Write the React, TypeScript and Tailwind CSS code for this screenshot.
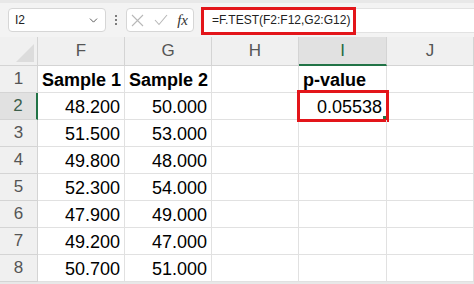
import { ChevronDown } from "lucide-react";

const cols = ["F", "G", "H", "I", "J"];

const rows = [
  { n: 1, f: "Sample 1", g: "Sample 2", i: "p-value", head: true },
  { n: 2, f: "48.200", g: "50.000", i: "0.05538" },
  { n: 3, f: "51.500", g: "53.000" },
  { n: 4, f: "49.800", g: "48.000" },
  { n: 5, f: "52.300", g: "54.000" },
  { n: 6, f: "47.900", g: "49.000" },
  { n: 7, f: "49.200", g: "47.000" },
  { n: 8, f: "50.700", g: "51.000" },
];

function Toolbar() {
  return (
    <div className="h-[37px] bg-[#f3f3f3] border-t-[3px] border-[#e8e8e8] flex items-center pl-[8px] gap-[6px]">
      {/* name box */}
      <div className="w-[98px] h-[24px] bg-white border border-[#d6d6d6] rounded-[4px] flex items-center justify-between pl-[6px] pr-[5px]">
        <span className="text-[12px] text-[#222]">I2</span>
        <ChevronDown size={13} strokeWidth={1.6} className="text-[#444]" />
      </div>
      {/* dots */}
      <div className="flex flex-col gap-[2px] px-[3px]">
        <span className="w-[2px] h-[2px] bg-[#555] rounded-full" />
        <span className="w-[2px] h-[2px] bg-[#555] rounded-full" />
        <span className="w-[2px] h-[2px] bg-[#555] rounded-full" />
      </div>
      {/* cancel / enter / fx */}
      <div className="w-[68px] h-[24px] bg-white border border-[#d6d6d6] rounded-[4px] flex items-center justify-between px-[4px]">
        <svg width="13" height="13" viewBox="0 0 13 13" fill="none" stroke="#b8b8b8" strokeWidth="1.1">
          <path d="M1 1 L12 12 M12 1 L1 12" />
        </svg>
        <svg width="14" height="12" viewBox="0 0 14 12" fill="none" stroke="#b8b8b8" strokeWidth="1.1">
          <path d="M1 6 L5 10.5 L13 1" />
        </svg>
        <span className="text-[15px] italic text-[#333] leading-none pr-[1px]" style={{ fontFamily: '"Liberation Serif", serif' }}>
          fx
        </span>
      </div>
      {/* formula bar */}
      <div className="flex-1 h-[25px] bg-white border-y border-[#e2e2e2] flex items-center relative ml-[1px]">
        <div className="absolute left-0 top-[-2px] w-[155px] h-[28px] border-[3px] border-[#e3151a]" />
        <span className="text-[12px] text-[#222] pl-[11px]">=F.TEST(F2:F12,G2:G12)</span>
      </div>
    </div>
  );
}

function Grid() {
  return (
    <div className="grid grid-cols-[38px_87px_87px_87px_88px_1fr] grid-rows-[29px_repeat(8,27px)] bg-white">
      {/* corner */}
      <div className="bg-[#f0f0f0] border-r border-b border-[#d4d4d4] flex items-end justify-end pr-[3px] pb-[3px]">
        <div className="w-0 h-0 border-l-[18px] border-l-transparent border-b-[18px] border-b-[#dcdcdc]" />
      </div>
      {cols.map((c) => (
        <div
          key={c}
          className={
            c === "I"
              ? "bg-[#e1e1e1] border-r border-[#d4d4d4] border-b-[2px] border-b-[#217346] flex items-center justify-center text-[17px] text-[#1f6b40]"
              : "bg-[#f0f0f0] border-r border-b border-[#d4d4d4] flex items-center justify-center text-[17px] text-[#555]"
          }
        >
          {c}
        </div>
      ))}
      {rows.map((r) => (
        <Row key={r.n} r={r} />
      ))}
    </div>
  );
}

function Row({ r }: { r: (typeof rows)[number] }) {
  const sel = r.n === 2;
  const cell = "border-r border-b border-[#e1e1e1] flex items-end pb-[3px] whitespace-nowrap text-[18px] leading-none text-black";
  const align = r.head ? "justify-start pl-[4px] font-bold text-[17px]" : "justify-end pr-[4px]";
  return (
    <>
      <div
        className={
          sel
            ? "bg-[#e1e1e1] border-b border-[#d4d4d4] border-r-[2px] border-r-[#217346] flex items-center justify-center text-[17px] text-[#3c5e4b]"
            : "bg-[#f0f0f0] border-r border-b border-[#d4d4d4] flex items-center justify-center text-[17px] text-[#555]"
        }
      >
        {r.n}
      </div>
      <div className={`${cell} ${align}`}>{r.f}</div>
      <div className={`${cell} ${align}`}>{r.g}</div>
      <div className={cell} />
      <div className={`${cell} relative ${align}`}>
        {r.i}
        {sel && (
          <>
            <div className="absolute left-[-2px] top-[-3px] right-[-3px] bottom-[-3px] border-[3px] border-[#e3151a]" />
            <div className="absolute right-[0px] bottom-[0px] w-[3px] h-[3px] bg-[#217346]" />
          </>
        )}
      </div>
      <div className={cell} />
    </>
  );
}

export default function App() {
  return (
    <div className="w-[474px] h-[284px] overflow-hidden bg-[#e8e8e8]" style={{ fontFamily: '"Liberation Sans", Arial, sans-serif' }}>
      <Toolbar />
      <Grid />
    </div>
  );
}
